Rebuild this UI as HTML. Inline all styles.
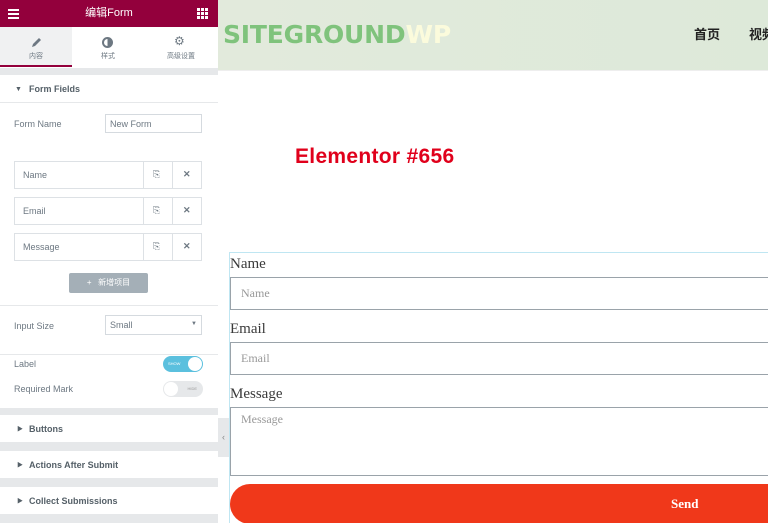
<!DOCTYPE html>
<html><head><meta charset="utf-8"><style>
*{box-sizing:border-box;margin:0;padding:0}
html,body{width:768px;height:523px;overflow:hidden}
body{position:relative;font-family:"Liberation Sans","Noto Sans CJK SC",sans-serif;background:#fff}
.a{position:absolute}
.p{font-size:9px;color:#6d7882}
.sec{position:absolute;left:0;width:218px;background:#fff;font-size:9px;font-weight:bold;color:#556068}
.fb{position:absolute;left:14px;width:188px;height:28px;border:1px solid #dde1e5;font-size:9px;color:#6d7882}
.fb span{position:absolute;left:8px;top:8px}
.fb i{position:absolute;top:0;bottom:0;border-left:1px solid #dde1e5}
.lbl{position:absolute;left:230px;font-family:"Liberation Serif",serif;font-size:15px;color:#3a3a3a}
.inp{position:absolute;left:230px;width:560px;border:1px solid #9aa3aa;border-right:none;font-family:"Liberation Serif",serif;font-size:12px;color:#999;padding-left:10px}
</style></head><body>
<div class="a" style="left:0;top:0;width:218px;height:523px;background:#e6e8ea"></div>
<div class="a" style="left:0;top:0;width:218px;height:27px;background:#93003c;color:#fff;font-size:11px;text-align:center;line-height:27px">编辑Form</div>
<div class="a" style="left:8px;top:9px;width:11px;height:2px;background:#fff;box-shadow:0 4px #fff,0 8px #fff"></div>
<svg class="a" style="left:197px;top:8px" width="11" height="11"><g fill="#fff"><rect x="0" y="0" width="3" height="3"/><rect x="4" y="0" width="3" height="3"/><rect x="8" y="0" width="3" height="3"/><rect x="0" y="4" width="3" height="3"/><rect x="4" y="4" width="3" height="3"/><rect x="8" y="4" width="3" height="3"/><rect x="0" y="8" width="3" height="3"/><rect x="4" y="8" width="3" height="3"/><rect x="8" y="8" width="3" height="3"/></g></svg>
<div class="a" style="left:0;top:27px;width:218px;height:41px;background:#fff"></div>
<div class="a" style="left:0;top:27px;width:72px;height:38px;background:#f0f1f2"></div>
<div class="a" style="left:0;top:65px;width:72px;height:2px;background:#93003c"></div>
<svg class="a" style="left:31px;top:37px" width="11" height="11"><path d="M1 10 L2 7 L8 1 L10 3 L4 9 Z" fill="#6d7882"/></svg>
<div class="a p" style="left:0;width:72px;top:51px;text-align:center;font-size:7px">内容</div>
<div class="a" style="left:102px;top:37px;width:11px;height:11px;border-radius:50%;border:2px solid #6d7882;background:linear-gradient(90deg,#fff 50%,#6d7882 50%)"></div>
<div class="a p" style="left:72px;width:72px;top:51px;text-align:center;font-size:7px">样式</div>
<div class="a" style="left:174px;top:34px;font-size:12px;color:#6d7882">⚙</div>
<div class="a p" style="left:144px;width:74px;top:51px;text-align:center;font-size:7px">高级设置</div>
<div class="sec" style="top:75px;height:333px"></div>
<div class="a" style="left:0;top:102px;width:218px;height:1px;background:#e6e8ea"></div>
<div class="a" style="left:15px;top:86px;font-size:7px;color:#556068">▼</div>
<div class="a" style="left:29px;top:84px;font-size:9px;font-weight:bold;color:#556068">Form Fields</div>
<div class="a p" style="left:14px;top:119px">Form Name</div>
<div class="a p" style="left:105px;top:114px;width:97px;height:19px;border:1px solid #d5dadf;padding:4px 4px;font-size:9px">New Form</div>
<div class="fb" style="top:161px"><span>Name</span><i style="left:128px"></i><i style="left:157px"></i><b style="position:absolute;left:138px;top:7px;font-weight:normal">⎘</b><b style="position:absolute;left:168px;top:7px">✕</b></div>
<div class="fb" style="top:197px"><span>Email</span><i style="left:128px"></i><i style="left:157px"></i><b style="position:absolute;left:138px;top:7px;font-weight:normal">⎘</b><b style="position:absolute;left:168px;top:7px">✕</b></div>
<div class="fb" style="top:233px"><span>Message</span><i style="left:128px"></i><i style="left:157px"></i><b style="position:absolute;left:138px;top:7px;font-weight:normal">⎘</b><b style="position:absolute;left:168px;top:7px">✕</b></div>
<div class="a" style="left:69px;top:273px;width:79px;height:20px;background:#a4afb7;border-radius:2px;color:#fff;font-size:8px;line-height:20px;text-align:center">+ &nbsp; 新增项目</div>
<div class="a" style="left:0;top:305px;width:218px;height:1px;background:#e6e8ea"></div>
<div class="a p" style="left:14px;top:321px">Input Size</div>
<div class="a p" style="left:105px;top:315px;width:97px;height:20px;border:1px solid #d5dadf;padding:4px 4px">Small<span style="position:absolute;right:4px;top:5px;font-size:6px">▼</span></div>
<div class="a" style="left:0;top:354px;width:218px;height:1px;background:#e6e8ea"></div>
<div class="a p" style="left:14px;top:359px">Label</div>
<div class="a" style="left:163px;top:356px;width:40px;height:16px;border-radius:8px;background:#5bc0de"><span style="position:absolute;left:5px;top:5px;font-size:4px;color:#fff">SHOW</span><span style="position:absolute;right:1px;top:1px;width:14px;height:14px;border-radius:50%;background:#fff"></span></div>
<div class="a p" style="left:14px;top:384px">Required Mark</div>
<div class="a" style="left:163px;top:381px;width:40px;height:16px;border-radius:8px;background:#e6e8ea"><span style="position:absolute;right:6px;top:5px;font-size:4px;color:#999">HIDE</span><span style="position:absolute;left:1px;top:1px;width:14px;height:14px;border-radius:50%;background:#fff"></span></div>
<div class="sec" style="top:415px;height:27px"><span style="position:absolute;left:17px;top:9px;font-size:6px">▶</span><span style="position:absolute;left:29px;top:9px">Buttons</span></div>
<div class="sec" style="top:451px;height:27px"><span style="position:absolute;left:17px;top:9px;font-size:6px">▶</span><span style="position:absolute;left:29px;top:9px">Actions After Submit</span></div>
<div class="sec" style="top:487px;height:27px"><span style="position:absolute;left:17px;top:9px;font-size:6px">▶</span><span style="position:absolute;left:29px;top:9px">Collect Submissions</span></div>
<div class="a" style="left:218px;top:418px;width:11px;height:39px;background:#e6e8ea;color:#888;font-size:9px;line-height:39px;text-align:center">‹</div>
<div class="a" style="left:218px;top:0;width:550px;height:71px;background:linear-gradient(90deg,#e2eadc,#dde9d9);border-bottom:1px solid #eee"></div>
<div class="a" style="left:223px;top:20px;font-size:25px;font-weight:900;color:#7fc37c;letter-spacing:-0.2px;font-family:'DejaVu Sans',sans-serif;white-space:nowrap">SITEGROUND<span style="color:#fbfbdc">WP</span></div>
<div class="a" style="left:694px;top:24px;font-size:13px;color:#222;font-weight:bold;white-space:nowrap">首页</div>
<div class="a" style="left:749px;top:24px;font-size:13px;color:#222;font-weight:bold;white-space:nowrap">视频</div>
<div class="a" style="left:295px;top:145px;font-size:21px;font-weight:bold;color:#e0001b;letter-spacing:0.3px;white-space:nowrap">Elementor #656</div>
<div class="a" style="left:229px;top:252px;width:560px;height:280px;border:1px solid #bfe6f2"></div>
<div class="lbl" style="top:256px">Name</div>
<div class="inp" style="top:277px;height:33px;line-height:31px">Name</div>
<div class="lbl" style="top:321px">Email</div>
<div class="inp" style="top:342px;height:33px;line-height:31px">Email</div>
<div class="lbl" style="top:386px">Message</div>
<div class="inp" style="top:407px;height:69px;padding-top:4px">Message</div>
<div class="a" style="left:230px;top:484px;width:580px;height:40px;border-radius:20px;background:#f0381a;color:#fff;font-family:'Liberation Serif',serif;font-weight:bold;font-size:13px;line-height:40px;padding-left:441px">Send</div>
</body></html>
